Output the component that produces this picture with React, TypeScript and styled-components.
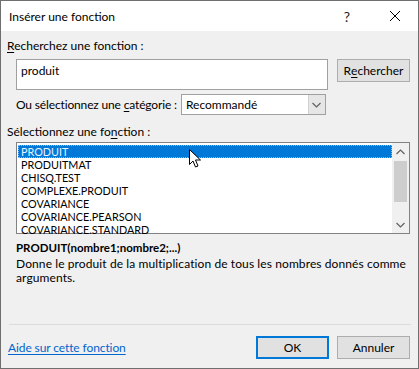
import React from "react";
import styled, { createGlobalStyle } from "styled-components";

const Global = createGlobalStyle`
  html, body { margin: 0; padding: 0; background: #f0f0f0; }
  body { font-family: "Lato", "Noto Sans", sans-serif; font-size: 12px; color: #000; }
  * { box-sizing: border-box; }
`;

const Window = styled.div`
  position: relative;
  width: 419px;
  height: 369px;
  border: 1px solid #6f6f6f;
  background: #f0f0f0;
  display: flex;
  flex-direction: column;
`;

const TitleBar = styled.div`
  height: 30px;
  background: #ffffff;
  display: flex;
  align-items: center;
  padding-left: 8px;
  flex-shrink: 0;
`;

const Title = styled.div`
  flex: 1;
  font-size: 12px;
`;

const TitleButton = styled.div<{ $w: number }>`
  width: ${(p) => p.$w}px;
  height: 30px;
  display: flex;
  align-items: center;
  justify-content: center;
  color: #1a1a1a;
  font-size: 14px;
`;

const Body = styled.div`
  flex: 1;
  display: flex;
  flex-direction: column;
  padding: 6px 7px 0 6px;
`;

const Label = styled.div<{ $mt?: number; $tight?: boolean }>`
  margin-top: ${(p) => p.$mt ?? 0}px;
  line-height: 15px;
  white-space: nowrap;
  letter-spacing: ${(p) => (p.$tight ? "-0.15px" : "0")};
`;

const U = styled.span`
  text-decoration: underline;
  text-underline-offset: 2px;
`;

const SearchRow = styled.div`
  display: flex;
  align-items: flex-start;
  margin-top: 6px;
  padding-left: 9px;
  gap: 9px;
`;

const SearchBox = styled.div`
  width: 312px;
  height: 31px;
  background: #fff;
  border: 1px solid #a0a0a0;
  padding: 3px 4px;
  line-height: 15px;
`;

const Button = styled.div<{ $default?: boolean }>`
  width: 73px;
  height: 23px;
  background: #e1e1e1;
  border: ${(p) => (p.$default ? "2px solid #0078d7" : "1px solid #adadad")};
  display: flex;
  align-items: center;
  justify-content: center;
  line-height: 15px;
`;

const CategoryRow = styled.div`
  display: flex;
  align-items: center;
  margin-top: 4px;
  padding-left: 9px;
  gap: 4px;
`;

const Select = styled.div`
  width: 145px;
  height: 21px;
  background: #fff;
  border: 1px solid #a0a0a0;
  display: flex;
  align-items: center;
`;

const SelectValue = styled.div`
  flex: 1;
  padding-left: 4px;
  line-height: 15px;
`;

const SelectArrow = styled.div`
  width: 17px;
  height: 19px;
  background: #e6e6e6;
  border-left: 1px solid #d0d0d0;
  display: flex;
  align-items: center;
  justify-content: center;
`;

const ListBox = styled.div`
  position: relative;
  margin-top: 3px;
  margin-left: 9px;
  width: 394px;
  height: 92px;
  background: #fff;
  border: 1px solid #828282;
  display: flex;
`;

const Items = styled.div`
  flex: 1;
  padding-top: 2px;
  padding-left: 1px;
`;

const Item = styled.div<{ $sel?: boolean }>`
  height: 13px;
  line-height: 11px;
  font-size: 10.8px;
  padding-left: ${(p) => (p.$sel ? 2 : 3)}px;
  white-space: nowrap;
  background: ${(p) => (p.$sel ? "#0078d7" : "transparent")};
  color: ${(p) => (p.$sel ? "#e6f2ff" : "#000")};
  border: 1px ${(p) => (p.$sel ? "dotted #7fbfff" : "solid transparent")};
  border-left-width: ${(p) => (p.$sel ? 1 : 0)}px;
`;

const Scrollbar = styled.div`
  width: 17px;
  background: #f0f0f0;
  display: flex;
  flex-direction: column;
  align-items: center;
`;

const ScrollArrow = styled.div`
  height: 17px;
  width: 17px;
  display: flex;
  align-items: center;
  justify-content: center;
`;

const Thumb = styled.div`
  width: 13px;
  height: 41px;
  background: #cdcdcd;
  margin-top: 1px;
`;

const ScrollSpacer = styled.div`
  flex: 1;
`;

const Syntax = styled.div`
  margin-top: 6px;
  margin-left: 9px;
  font-weight: 700;
  font-size: 11.5px;
  line-height: 15px;
`;

const Description = styled.div`
  margin-top: 2px;
  margin-left: 9px;
  width: 392px;
  line-height: 14px;
  letter-spacing: 0.1px;
`;

const Spacer = styled.div`
  flex: 1;
`;

const Separator = styled.div`
  height: 1px;
  background: #dcdcdc;
  margin-left: 2px;
`;

const Footer = styled.div`
  display: flex;
  align-items: center;
  height: 43px;
  padding-bottom: 5px;
  padding-top: 6px;
`;

const Link = styled.a`
  color: #0066cc;
  text-decoration: underline;
  text-underline-offset: 2px;
  flex: 1;
  margin-left: 1px;
  letter-spacing: -0.1px;
`;

const ButtonGroup = styled.div`
  display: flex;
  gap: 8px;
  margin-right: 1px;
`;

const Cursor = styled.svg`
  position: absolute;
  left: 172px;
  top: 6px;
`;

const Chevron = ({ dir }: { dir: "up" | "down" }) => (
  <svg width="9" height="6" viewBox="0 0 9 6">
    <path
      d={dir === "up" ? "M0.5 5 L4.5 1 L8.5 5" : "M0.5 1 L4.5 5 L8.5 1"}
      fill="none"
      stroke="#606060"
      strokeWidth="1.2"
    />
  </svg>
);

const items = [
  "PRODUIT",
  "PRODUITMAT",
  "CHISQ.TEST",
  "COMPLEXE.PRODUIT",
  "COVARIANCE",
  "COVARIANCE.PEARSON",
  "COVARIANCE.STANDARD",
];

export default function App() {
  return (
    <>
      <Global />
      <Window>
        <TitleBar>
          <Title>Insérer une fonction</Title>
          <TitleButton $w={50}>?</TitleButton>
          <TitleButton $w={46}>
            <svg width="12" height="12" viewBox="0 0 12 12">
              <path d="M1 1 L11 11 M11 1 L1 11" stroke="#000" strokeWidth="1" />
            </svg>
          </TitleButton>
        </TitleBar>
        <Body>
          <Label $mt={1}>
            <U>R</U>echerchez une fonction :
          </Label>
          <SearchRow>
            <SearchBox>produit</SearchBox>
            <Button>
              R<U>e</U>chercher
            </Button>
          </SearchRow>
          <CategoryRow>
            <Label $tight>
              Ou sélectionnez une <U>c</U>atégorie :
            </Label>
            <Select>
              <SelectValue>Recommandé</SelectValue>
              <SelectArrow>
                <Chevron dir="down" />
              </SelectArrow>
            </Select>
          </CategoryRow>
          <Label $mt={9}>
            Sélectionnez une fo<U>n</U>ction :
          </Label>
          <ListBox>
            <Items>
              {items.map((it, i) => (
                <Item key={it} $sel={i === 0}>
                  {it}
                </Item>
              ))}
            </Items>
            <Scrollbar>
              <ScrollArrow>
                <Chevron dir="up" />
              </ScrollArrow>
              <Thumb />
              <ScrollSpacer />
              <ScrollArrow>
                <Chevron dir="down" />
              </ScrollArrow>
            </Scrollbar>
            <Cursor width="13" height="20" viewBox="0 0 13 20">
              <path
                d="M0.5 0.5 L0.5 15.5 L4 12 L6.5 18 L9 17 L6.5 11 L11.5 11 Z"
                fill="#fff"
                stroke="#000"
                strokeWidth="1"
              />
            </Cursor>
          </ListBox>
          <Syntax>PRODUIT(nombre1;nombre2;...)</Syntax>
          <Description>
            Donne le produit de la multiplication de tous les nombres donnés comme arguments.
          </Description>
          <Spacer />
          <Separator />
          <Footer>
            <Link>Aide sur cette fonction</Link>
            <ButtonGroup>
              <Button $default>OK</Button>
              <Button>Annuler</Button>
            </ButtonGroup>
          </Footer>
        </Body>
      </Window>
    </>
  );
}
